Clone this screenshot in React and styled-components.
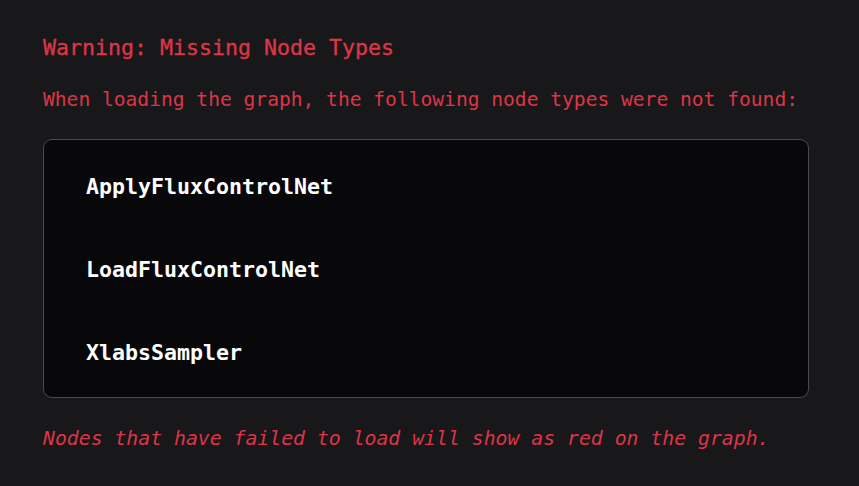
import React from "react";
import styled, { createGlobalStyle } from "styled-components";

const GlobalStyle = createGlobalStyle`
  html, body {
    margin: 0;
    padding: 0;
    background: #18181a;
  }
  body {
    font-family: "DejaVu Sans Mono", "Liberation Mono", monospace;
  }
`;

const Dialog = styled.div`
  box-sizing: border-box;
  width: 859px;
  min-height: 486px;
  padding: 35px 50px 0 43px;
  color: #dd3546;
`;

const Title = styled.h2`
  margin: 0;
  font-size: 21.6px;
  line-height: 26px;
  font-weight: normal;
  -webkit-text-stroke: 0.35px #dd3546;
`;

const Message = styled.p`
  margin: 27px 0 0;
  font-size: 19.6px;
  line-height: 24px;
  white-space: nowrap;
`;

const TypeList = styled.ul`
  box-sizing: border-box;
  list-style: none;
  margin: 27px 0 0;
  padding: 5px 42px;
  width: 766px;
  height: 259px;
  background: #08080a;
  border: 1px solid #4a4a4c;
  border-radius: 9px;
`;

const TypeItem = styled.li`
  height: 83px;
  display: flex;
  align-items: center;
  color: #ffffff;
  font-size: 21.6px;
  font-weight: bold;
`;

const Hint = styled.p`
  margin: 29px 0 0;
  font-size: 19.8px;
  line-height: 24px;
  font-style: italic;
  white-space: nowrap;
`;

const missing = ["ApplyFluxControlNet", "LoadFluxControlNet", "XlabsSampler"];

export default function App() {
  return (
    <>
      <GlobalStyle />
      <Dialog>
        <Title>Warning: Missing Node Types</Title>
        <Message>When loading the graph, the following node types were not found:</Message>
        <TypeList>
          {missing.map((name) => (
            <TypeItem key={name}>{name}</TypeItem>
          ))}
        </TypeList>
        <Hint>Nodes that have failed to load will show as red on the graph.</Hint>
      </Dialog>
    </>
  );
}
